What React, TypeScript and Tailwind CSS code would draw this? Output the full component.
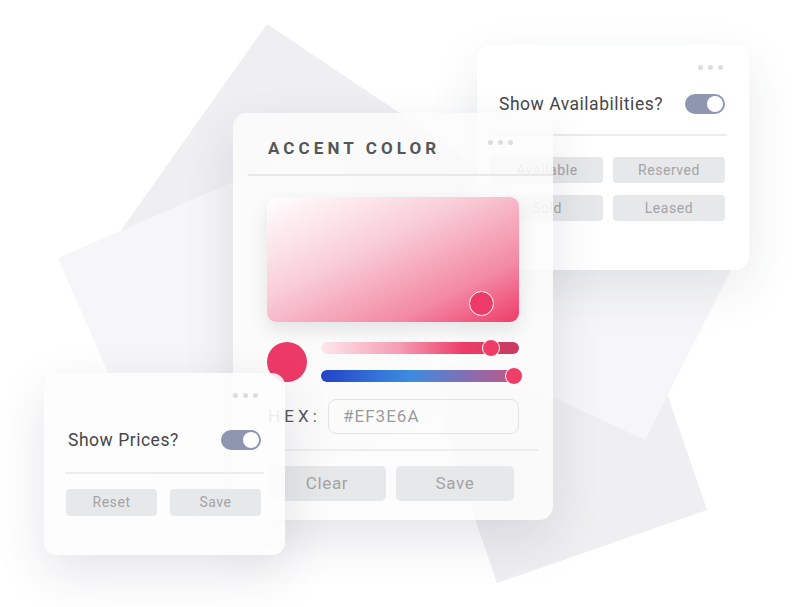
import React from "react";

const font = { fontFamily: "Roboto, 'Noto Sans', Arial, sans-serif" };

function Dots() {
  return (
    <div className="flex gap-[5px]">
      <span className="w-[5px] h-[5px] rounded-full bg-[#dcdde0]" />
      <span className="w-[5px] h-[5px] rounded-full bg-[#dcdde0]" />
      <span className="w-[5px] h-[5px] rounded-full bg-[#dcdde0]" />
    </div>
  );
}

function Toggle() {
  return (
    <div className="w-[40px] h-[20px] rounded-full bg-[#8f97b0] flex items-center justify-end pr-[2px]">
      <div className="w-[16px] h-[16px] rounded-full bg-white" />
    </div>
  );
}

function Btn({ label, className }: { label: string; className: string }) {
  return (
    <div
      className={
        "rounded-[4px] bg-[#e7e8e9] text-[#a3a4a6] flex items-center justify-center tracking-[0.04em] " +
        className
      }
    >
      {label}
    </div>
  );
}

export default function App() {
  return (
    <div className="relative w-[800px] h-[607px] overflow-hidden bg-white" style={font}>
      {/* background shapes */}
      <svg className="absolute inset-0" width="800" height="607" viewBox="0 0 800 607">
        <polygon points="267,24 483,169 333,381 117,236" fill="#efeff2" />
        <polygon points="425,373 635,300 707,510 497,583" fill="#efeff2" />
        <polygon points="58,258 330,140 448,411 176,529" fill="#f6f6f8" />
        <polygon points="545,151 744,244 645,440 446,347" fill="#f6f6f8" />
      </svg>

      {/* Right card: Show Availabilities */}
      <div className="absolute left-[477px] top-[45px] w-[272px] h-[225px] rounded-[14px] bg-[rgba(255,255,255,0.92)] shadow-[0_18px_50px_rgba(40,45,70,0.10)] flex flex-col">
        <div className="flex justify-end pr-[26px] pt-[20px] h-[25px]">
          <Dots />
        </div>
        <div className="flex items-center justify-between pl-[22px] pr-[24px] mt-[24px] h-[20px]">
          <span className="text-[17.5px] text-[#46474a] tracking-[0.03em]">Show Availabilities?</span>
          <Toggle />
        </div>
        <div className="ml-[13px] mr-[22px] mt-[20px] h-[2px] bg-[#ececee]" />
        <div className="grid grid-cols-[112px_112px] gap-x-[10px] gap-y-[12px] pl-[14px] mt-[21px] text-[14px]">
          <Btn label="Available" className="h-[26px]" />
          <Btn label="Reserved" className="h-[26px]" />
          <Btn label="Sold" className="h-[26px]" />
          <Btn label="Leased" className="h-[26px]" />
        </div>
      </div>

      {/* Accent color card */}
      <div className="absolute left-[233px] top-[113px] w-[320px] h-[407px] rounded-[14px] bg-[rgba(251,251,252,0.86)] shadow-[0_20px_50px_rgba(40,45,70,0.12)] flex flex-col">
        <div className="relative pl-[35px] pt-[24px] h-[61px]">
          <span className="text-[17px] leading-[20px] font-bold tracking-[0.24em] text-[#555659]">ACCENT COLOR</span>
          <div className="absolute right-[40px] top-[27px]">
            <Dots />
          </div>
        </div>
        <div className="ml-[15px] h-[2px] bg-[#e8e8ea]" />
        <div className="relative mx-[34px] mt-[21px] h-[125px] rounded-[9px] bg-[linear-gradient(to_bottom_right,#ffffff_0%,#f9cdd8_40%,#f38aa4_75%,#ee3c69_100%)] shadow-[0_8px_18px_rgba(60,60,80,0.12)]">
          <div className="absolute left-[202px] top-[94px] w-[25px] h-[25px] rounded-full bg-[#ee3a68] border-[1.5px] border-white" />
        </div>
        <div className="flex mt-[20px] pl-[34px]">
          <div className="w-[40px] h-[40px] rounded-full bg-[#ec3a66]" />
          <div className="flex flex-col ml-[14px] w-[198px]">
            <div className="relative h-[12px] mt-[0px] rounded-full bg-[linear-gradient(to_right,#fde7ed_0%,#f59bb2_40%,#ec3d68_72%,#e03c65_85%,#cc3b61_86%,#cc3b61_100%)]">
              <div className="absolute left-[161px] top-[-3px] w-[18px] h-[18px] rounded-full bg-[#ef3d69] border-[1.5px] border-white" />
            </div>
            <div className="relative h-[12px] mt-[16px] rounded-full bg-[linear-gradient(to_right,#2443c7_0%,#3575d9_30%,#3c8be0_45%,#7b72ba_70%,#c25682_100%)]">
              <div className="absolute left-[184px] top-[-3px] w-[18px] h-[18px] rounded-full bg-[#ef3d69] border-[1px] border-white" />
            </div>
          </div>
        </div>
        <div className="flex items-center mt-[17px] pl-[35px] h-[35px]">
          <span className="text-[17px] tracking-[0.24em] text-[#55565a] w-[60px]">HEX:</span>
          <div className="w-[191px] h-[35px] rounded-[8px] border border-[#e3e3e5] flex items-center pl-[14px] text-[17px] tracking-[0.06em] text-[#9a9b9e]">
            #EF3E6A
          </div>
        </div>
        <div className="mx-[15px] mt-[15px] h-[2px] bg-[#ececee]" />
        <div className="flex gap-[10px] pl-[35px] mt-[15px] text-[17px]">
          <Btn label="Clear" className="w-[118px] h-[35px] rounded-[5px]" />
          <Btn label="Save" className="w-[118px] h-[35px] rounded-[5px]" />
        </div>
      </div>

      {/* Left card: Show Prices */}
      <div className="absolute left-[44px] top-[373px] w-[241px] h-[182px] rounded-[13px] bg-[rgba(253,253,253,0.9)] shadow-[0_18px_50px_rgba(40,45,70,0.12)] flex flex-col">
        <div className="flex justify-end pr-[27px] pt-[20px] h-[25px]">
          <Dots />
        </div>
        <div className="flex items-center justify-between pl-[24px] pr-[24px] mt-[32px] h-[20px]">
          <span className="text-[17.5px] text-[#46474a] tracking-[0.03em]">Show Prices?</span>
          <Toggle />
        </div>
        <div className="mx-[21px] mt-[22px] h-[2px] bg-[#ececee]" />
        <div className="flex gap-[13px] pl-[22px] mt-[15px] text-[14px]">
          <Btn label="Reset" className="w-[91px] h-[27px]" />
          <Btn label="Save" className="w-[91px] h-[27px]" />
        </div>
      </div>
    </div>
  );
}
